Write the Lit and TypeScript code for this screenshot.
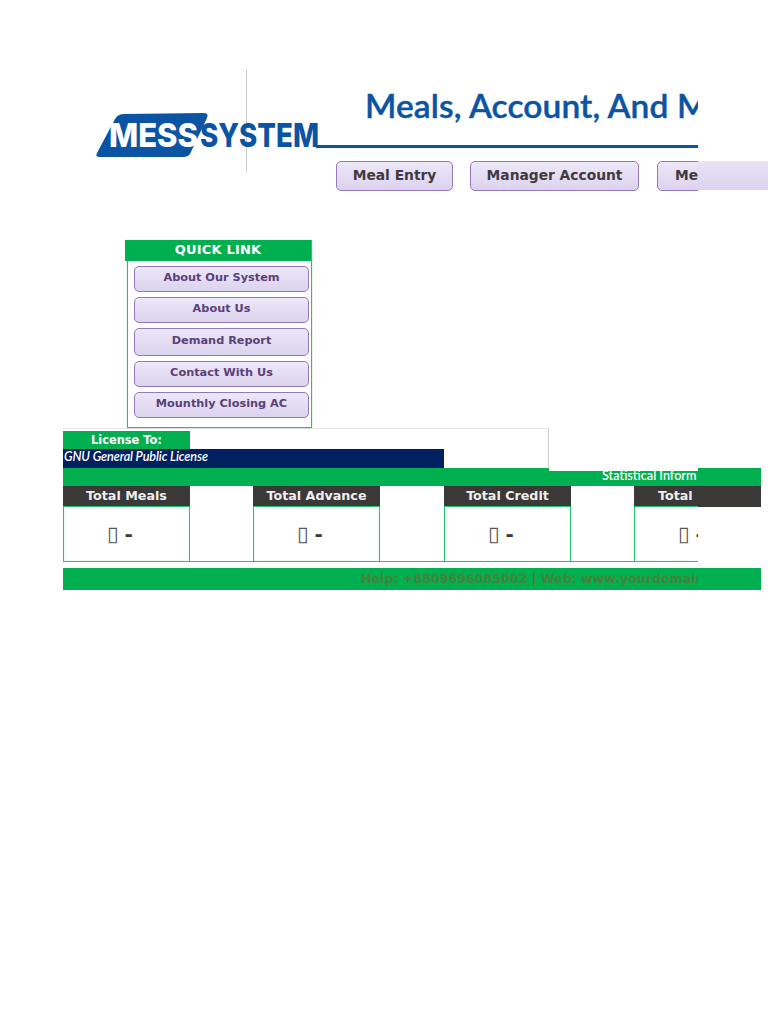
import { LitElement, html, css } from "lit";
import { customElement } from "lit/decorators.js";

const quick = [
  { label: "About Our System", h: 26, gap: 5 },
  { label: "About Us", h: 26, gap: 5 },
  { label: "Demand Report", h: 28, gap: 5 },
  { label: "Contact With Us", h: 26, gap: 5 },
  { label: "Mounthly Closing AC", h: 26, gap: 0 },
];
const cards = ["Total Meals", "Total Advance", "Total Credit", "Total"];

@customElement("app-root")
export class AppRoot extends LitElement {
  static styles = css`
    :host { display: block; width: 768px; height: 1024px; overflow: hidden; background: #fff; font-family: "DejaVu Sans", sans-serif; }
    * { box-sizing: border-box; }
    .head { display: flex; height: 122px; margin-top: 70px; position: relative; }
    .logo-col { width: 247px; height: 102px; border-right: 1px solid #c9c9c9; flex: none; }
    .logo { position: absolute; left: 96px; top: 43px; width: 224px; height: 45px; z-index: 1; display: block; }
    .logo text { font-family: Inter, sans-serif; font-weight: 800; font-size: 33px; }
    .main { width: 451px; flex: none; overflow: hidden; }
    .title { height: 75px; padding: 15px 0 0 118px; font: 600 33.5px/40px Lato, sans-serif; letter-spacing: .1px; -webkit-text-stroke: .4px #0b54a4; color: #0b54a4; white-space: nowrap; }
    .rule { height: 3px; margin-left: 69px; background: #0b54a4; }
    .navs { display: flex; gap: 17px; margin-top: 13px; padding-left: 89px; }
    .nav { flex: none; height: 30px; border: 1px solid #9578bb; border-radius: 5px; background: linear-gradient(#ece7f8, #dcd3ee); color: #3f3a3f; font-weight: 700; font-size: 13.8px; line-height: 27px; text-align: center; white-space: nowrap; }
    .n1 { width: 117px; }
    .n2 { width: 169px; }
    .n3 { width: 120px; margin-left: 1px; padding-left: 17px; text-align: left; }
    .ext { flex: none; width: 70px; height: 29px; margin-top: 91px; background: linear-gradient(#e9e3f6, #dcd3ee); }
    .quick { width: 187px; height: 188px; margin: 48px 0 0 125px; position: relative; }
    .quick-frame { margin-left: 2px; height: 188px; border: 1px solid #22c46f; border-top: 0; box-shadow: 0 0 1px #4fd68a; padding: 26px 2px 0 6px; display: flex; flex-direction: column; }
    .quick-head { position: absolute; left: 0; top: 0; width: 186px; height: 21px; background: #00b050; color: #fff; font-weight: 700; font-size: 13px; line-height: 20px; letter-spacing: .2px; text-align: center; }
    .q { flex: none; border: 1px solid #9578bb; border-radius: 5px; background: linear-gradient(#ece7f8, #dcd3ee); color: #5b4179; font-weight: 700; font-size: 11.3px; text-align: center; white-space: nowrap; }
    .lic { width: 486px; height: 40px; margin-left: 63px; border-top: 1px solid #e6e6e6; border-right: 1px solid #cfcfcf; padding-top: 2px; }
    .lic-to { width: 127px; height: 18px; background: #00b050; color: #fff; font-weight: 700; font-size: 11.4px; line-height: 18px; text-align: center; }
    .lic-name { width: 381px; height: 19px; background: #002060; color: #fff; font: italic 600 12.6px/15px Lato, sans-serif; letter-spacing: -.1px; padding-left: 1px; white-space: nowrap; }
    .stat { position: relative; width: 698px; height: 18px; margin-left: 63px; background: #00b050; }
    .notch { position: absolute; left: 486px; top: 0; width: 149px; height: 3px; background: #fff; }
    .stat-clip { width: 635px; height: 18px; overflow: hidden; padding-left: 539px; color: #fff; font: 600 12.6px/16px Lato, sans-serif; white-space: nowrap; position: relative; }
    .row { display: flex; margin-left: 63px; width: 698px; height: 76px; }
    .cards { width: 635px; flex: none; overflow: hidden; display: grid; grid-template-columns: 127px 63px 127px 64px 127px 63px 127px; }
    .band { width: 63px; height: 21px; background: #3b3838; flex: none; }
    .card { border: 1px solid #22c46f; border-top: 0; box-shadow: inset 0 0 1px #4fd68a; height: 76px; }
    .card-head { height: 21px; background: #3b3838; border-bottom: 1px solid #22c46f; color: #eee; font-weight: 700; font-size: 12.7px; line-height: 20px; text-align: center; margin: 0 -1px; white-space: nowrap; }
    .last { text-align: left; padding-left: 24px; }
    .gap { border-bottom: 1px solid #22c46f; height: 76px; }
    .val { height: 54px; padding-left: 43px; display: flex; align-items: center; gap: 6px; color: #3b3838; }
    .tofu { font-size: 21px; line-height: 1; font-weight: 400; color: #555; }
    .dash { font-size: 20px; font-weight: 700; line-height: 1; }
    .help { width: 698px; height: 22px; margin: 6px 0 0 63px; background: #00b050; }
    .help-clip { width: 635px; height: 22px; overflow: hidden; padding-left: 298px; color: #47803a; font-weight: 700; font-size: 12.6px; line-height: 22px; white-space: nowrap; }
  `;

  render() {
    return html`
      <div class="head">
        <div class="logo-col"></div>
        <svg class="logo" viewBox="0 0 224 45" aria-label="Mess System">
          <path d="M19 6 Q22 1 28 1 L108 0 Q113 0 111 5 L94 41 Q92 44 87 44 L3 44 Q-1 44 1 40 Z" fill="#0b54a4"></path>
          <text x="13" y="34" fill="#fff" textLength="89" lengthAdjust="spacingAndGlyphs">MESS</text>
          <text x="104" y="34" fill="#0b54a4" textLength="119" lengthAdjust="spacingAndGlyphs">SYSTEM</text>
        </svg>
        <div class="main">
          <div class="title">Meals, Account, And M</div>
          <div class="rule"></div>
          <div class="navs">
            <div class="nav n1">Meal Entry</div>
            <div class="nav n2">Manager Account</div>
            <div class="nav n3">Me</div>
          </div>
        </div>
        <div class="ext"></div>
      </div>

      <div class="quick">
        <div class="quick-frame">
          ${quick.map((q) => html`<div class="q" style="height:${q.h}px;line-height:${q.h - 4}px;margin-bottom:${q.gap}px">${q.label}</div>`)}
        </div>
        <div class="quick-head">QUICK LINK</div>
      </div>

      <div class="lic">
        <div class="lic-to">License To:</div>
        <div class="lic-name">GNU General Public License</div>
      </div>
      <div class="stat">
        <div class="stat-clip">Statistical Inform</div>
        <div class="notch"></div>
      </div>
      <div class="row">
        <div class="cards">
          ${cards.map((c, i) => html`
            <div class="card">
              <div class="card-head ${i === 3 ? "last" : ""}">${c}</div>
              <div class="val"><span class="tofu">▯</span><span class="dash">-</span></div>
            </div>
            ${i < 3 ? html`<div class="gap"></div>` : ""}
          `)}
        </div>
        <div class="band"></div>
      </div>
      <div class="help">
        <div class="help-clip">Help: +8809696085002 | Web: www.yourdomain</div>
      </div>
    `;
  }
}
